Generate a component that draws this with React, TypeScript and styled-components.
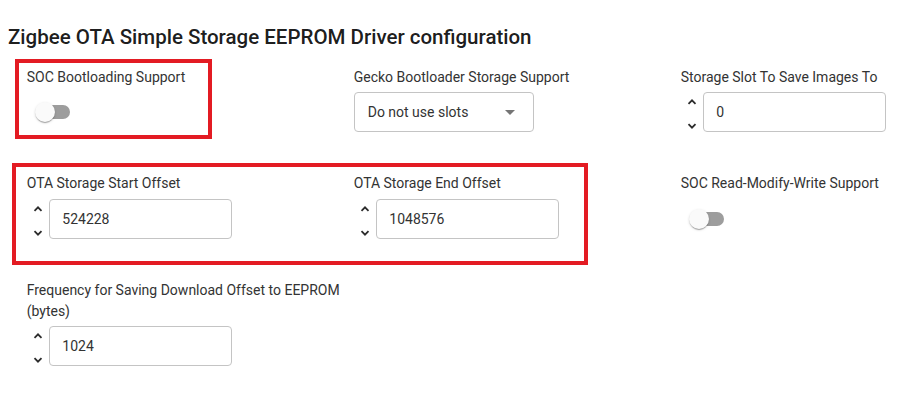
import styled, { createGlobalStyle } from 'styled-components';

const GlobalStyle = createGlobalStyle`
  body {
    margin: 0;
    background: #ffffff;
    font-family: Roboto, "Liberation Sans", Arial, sans-serif;
  }
`;

const Page = styled.div`
  padding: 24.5px 0 0 8px;
  width: 900px;
  height: 408px;
  box-sizing: border-box;
`;

const Title = styled.h2`
  margin: 0;
  font-size: 20.5px;
  line-height: 24px;
  font-weight: 500;
  color: rgba(0, 0, 0, 0.9);
`;

const Grid = styled.div`
  display: grid;
  grid-template-columns: 327px 327px 1fr;
  row-gap: 41px;
  margin: 18px 0 0 18.7px;
`;

const Pair = styled.div`
  display: grid;
  grid-template-columns: 327px 327px;
`;

const Highlight = styled.div<{
  $left: number;
  $top: number;
  $width: number;
  $height: number;
  $span?: number;
}>`
  position: relative;
  grid-column: span ${(p) => p.$span ?? 1};

  &::after {
    content: '';
    position: absolute;
    left: ${(p) => p.$left}px;
    top: ${(p) => p.$top}px;
    width: ${(p) => p.$width}px;
    height: ${(p) => p.$height}px;
    box-sizing: border-box;
    border: 4px solid #e31b23;
    pointer-events: none;
  }
`;

const Field = styled.div`
  display: flex;
  flex-direction: column;
  gap: 4.5px;
`;

const Label = styled.label`
  font-size: 14px;
  line-height: 21px;
  color: #333333;
  max-width: 326px;
`;

const Control = styled.div`
  display: flex;
  align-items: stretch;
  height: 40px;
`;

const SpinButtons = styled.div`
  width: 22px;
  flex: none;
  display: flex;
  flex-direction: column;
  align-items: center;
  justify-content: space-between;
  padding: 7px 0 3px;
  box-sizing: border-box;
  margin-right: 0.6px;
`;

const TextBox = styled.div`
  width: 183px;
  box-sizing: border-box;
  border: 1px solid #c4c4c4;
  border-radius: 4px;
  padding: 0 12px;
  display: flex;
  align-items: center;
  font-size: 14px;
  color: #333333;
`;

const Select = styled(TextBox)`
  width: 180px;
  justify-content: space-between;
  padding: 0 18px 0 13px;
`;

const SwitchArea = styled.div`
  height: 40px;
  display: flex;
  align-items: center;
  padding-left: 8px;
`;

const Switch = styled.div`
  position: relative;
  width: 36px;
  height: 20px;
`;

const Track = styled.div`
  position: absolute;
  left: 1px;
  top: 3px;
  width: 34px;
  height: 14px;
  border-radius: 7px;
  background: #9d9d9d;
`;

const Thumb = styled.div`
  position: absolute;
  left: 0;
  top: 0;
  width: 20px;
  height: 20px;
  border-radius: 50%;
  background: #fafafa;
  box-shadow: 0 2px 1px -1px rgba(0, 0, 0, 0.2), 0 1px 1px 0 rgba(0, 0, 0, 0.14),
    0 1px 3px 0 rgba(0, 0, 0, 0.12);
`;

const Chevron = ({ down }: { down?: boolean }) => (
  <svg width="10" height="6" viewBox="0 0 10 6">
    <path
      d={down ? 'M1.5 1.2 L5 4.7 L8.5 1.2' : 'M1.5 4.8 L5 1.3 L8.5 4.8'}
      fill="none"
      stroke="#2b2b2b"
      strokeWidth="1.8"
    />
  </svg>
);

const DropArrow = () => (
  <svg width="10" height="5" viewBox="0 0 10 5">
    <path d="M0 0 L10 0 L5 5 Z" fill="#757575" />
  </svg>
);

const NumberField = ({ label, value }: { label: string; value: string }) => (
  <Field>
    <Label>{label}</Label>
    <Control>
      <SpinButtons>
        <Chevron />
        <Chevron down />
      </SpinButtons>
      <TextBox>{value}</TextBox>
    </Control>
  </Field>
);

const ToggleField = ({ label }: { label: string }) => (
  <Field>
    <Label>{label}</Label>
    <SwitchArea>
      <Switch>
        <Track />
        <Thumb />
      </Switch>
    </SwitchArea>
  </Field>
);

const App = () => (
  <Page>
    <GlobalStyle />
    <Title>Zigbee OTA Simple Storage EEPROM Driver configuration</Title>
    <Grid>
      <Highlight $left={-12} $top={-7.5} $width={197} $height={80}>
        <ToggleField label="SOC Bootloading Support" />
      </Highlight>
      <Field>
        <Label>Gecko Bootloader Storage Support</Label>
        <Control>
          <Select>
            <span>Do not use slots</span>
            <DropArrow />
          </Select>
        </Control>
      </Field>
      <NumberField label="Storage Slot To Save Images To" value="0" />

      <Highlight $left={-14.5} $top={-10.5} $width={576} $height={102} $span={2}>
        <Pair>
          <NumberField label="OTA Storage Start Offset" value="524228" />
          <NumberField label="OTA Storage End Offset" value="1048576" />
        </Pair>
      </Highlight>
      <ToggleField label="SOC Read-Modify-Write Support" />

      <NumberField label="Frequency for Saving Download Offset to EEPROM (bytes)" value="1024" />
    </Grid>
  </Page>
);

export default App;
